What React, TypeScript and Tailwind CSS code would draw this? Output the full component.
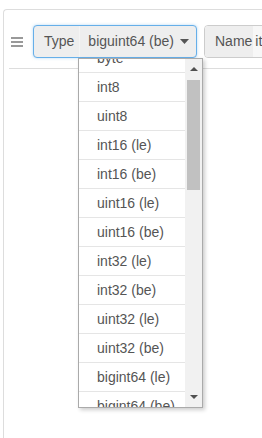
import React from 'react'

const types = [
  'byte',
  'int8',
  'uint8',
  'int16 (le)',
  'int16 (be)',
  'uint16 (le)',
  'uint16 (be)',
  'int32 (le)',
  'int32 (be)',
  'uint32 (le)',
  'uint32 (be)',
  'bigint64 (le)',
  'bigint64 (be)',
  'biguint64 (le)',
]

const App: React.FC = () => {
  return (
    <div
      className="relative w-[262px] h-[438px] overflow-hidden bg-white text-[14px] text-[#555]"
      style={{ fontFamily: '"Liberation Sans", Arial, sans-serif' }}
    >
      {/* Panel */}
      <div className="ml-[3px] mt-[9px] h-[440px] border-l border-t border-[#ddd] rounded-tl-[4px]">
        {/* Toolbar */}
        <div className="ml-[5px] pt-[15px] pb-[10px] border-b border-[#ddd] flex items-center whitespace-nowrap">
          {/* Hamburger */}
          <div className="ml-[2px] w-[12px] flex flex-col gap-[2px] shrink-0">
            <div className="h-[2px] bg-[#999]" />
            <div className="h-[2px] bg-[#999]" />
            <div className="h-[2px] bg-[#999]" />
          </div>

          {/* Type select */}
          <div className="ml-[10px] w-[164px] h-[33px] shrink-0 flex items-stretch border border-[#66afe9] rounded-[4px] bg-[#eee] shadow-[0_0_3px_rgba(102,175,233,0.5)]">
            <div className="pl-[10px] pr-[5px] flex items-center border-r border-[#f4f4f4]">Type</div>
            <div className="flex-1 pl-[8px] pr-[6px] flex items-center justify-between">
              <span>biguint64 (be)</span>
              <svg width="9" height="5" viewBox="0 0 9 5" className="mr-[1px] shrink-0">
                <path d="M0 0 L9 0 L4.5 5 Z" fill="#555" />
              </svg>
            </div>
          </div>

          {/* Name field */}
          <div className="ml-[7px] h-[33px] shrink-0 flex items-stretch border border-[#ccc] rounded-[4px] overflow-hidden">
            <div className="pl-[10px] pr-[1px] flex items-center bg-[#eee]">Name</div>
            <div className="pl-[2px] pr-[10px] flex items-center bg-[#f7f7f7] text-[#555]">item</div>
          </div>
        </div>
      </div>

      {/* Dropdown list */}
      <div className="absolute left-[78px] top-[58px] w-[125px] h-[350px] flex bg-white border border-[#aaa] shadow-[2px_2px_4px_rgba(0,0,0,0.2)]">
        <div className="flex-1 overflow-hidden">
          <div className="-mt-[15px]">
            {types.map((t) => (
              <div
                key={t}
                className="h-[29px] pl-[18px] flex items-center border-b border-[#e5e5e5] text-[#555]"
              >
                {t}
              </div>
            ))}
          </div>
        </div>
        {/* Scrollbar */}
        <div className="w-[17px] bg-[#f1f1f1] flex flex-col items-center">
          <div className="h-[20px] flex items-center justify-center">
            <svg width="8" height="4" viewBox="0 0 8 4">
              <path d="M0 4 L8 4 L4 0 Z" fill="#505050" />
            </svg>
          </div>
          <div className="mt-[1px] w-[13px] h-[110px] bg-[#c1c1c1]" />
          <div className="flex-1" />
          <div className="h-[20px] flex items-center justify-center">
            <svg width="8" height="4" viewBox="0 0 8 4">
              <path d="M0 0 L8 0 L4 4 Z" fill="#505050" />
            </svg>
          </div>
        </div>
      </div>
    </div>
  )
}

export default App
